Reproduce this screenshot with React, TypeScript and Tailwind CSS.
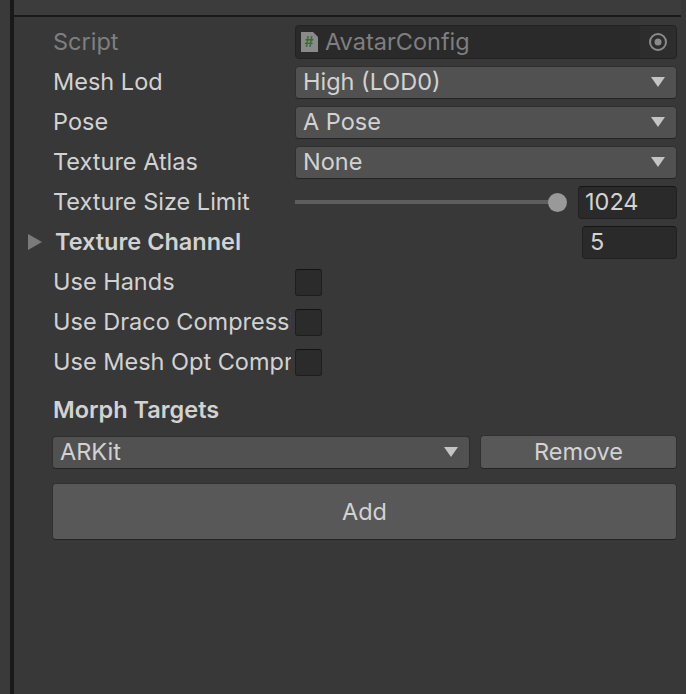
import React from 'react'

function Arrow() {
  return (
    <svg width="14" height="10" viewBox="0 0 14 10" className="shrink-0">
      <path d="M0 0 L14 0 L7 10 Z" fill="#c4c4c4" />
    </svg>
  )
}

function Dropdown({ value, className = '' }: { value: string; className?: string }) {
  return (
    <div
      className={`h-[33px] flex items-center justify-between pl-[7px] pr-[11px] bg-[#515151] rounded-[4px] border border-[#303030] border-b-[#242424] ${className}`}
    >
      <span className="text-[#d2d2d2]">{value}</span>
      <Arrow />
    </div>
  )
}

function Label({ children, dim = false }: { children: React.ReactNode; dim?: boolean }) {
  return (
    <div
      className={`w-[238px] mr-[4px] shrink-0 overflow-hidden whitespace-nowrap leading-[30px] ${dim ? 'text-[#7f7f7f]' : 'text-[#d2d2d2]'}`}
    >
      {children}
    </div>
  )
}

function Checkbox() {
  return <div className="w-[27px] h-[27px] rounded-[3px] bg-[#2b2b2b] border border-[#1e1e1e] border-t-[#141414]" />
}

export default function App() {
  return (
    <div className="w-[686px] h-[694px] bg-[#383838] flex font-['Inter',sans-serif] text-[23.5px] leading-[30px] overflow-hidden">
      {/* left strip */}
      <div className="w-[10px] shrink-0 bg-[#3a3a3a]" />
      <div className="w-[4px] shrink-0 bg-[#191919]" />

      <div className="flex-1 flex flex-col">
        {/* header */}
        <div className="h-[15px] bg-[#3c3c3c] mr-[5px]" />
        <div className="h-[2px] bg-[#1a1a1a] mr-[5px]" />

        <div className="flex flex-col pl-[39px] pr-[9px] pt-[5px]">
          {/* Script */}
          <div className="h-[40px] flex items-center">
            <Label dim>Script</Label>
            <div className="flex-1 h-[34px] flex items-center bg-[#2a2a2a] rounded-[4px] border border-[#222222] pl-[5px]">
              <svg width="17" height="20" viewBox="0 0 17 20" className="shrink-0">
                <path d="M0 0 H12 L17 5 V20 H0 Z" fill="#8a8a8a" />
                <text x="8" y="15" textAnchor="middle" fontSize="14" fontFamily="Inter" fill="#3a6b2f" fontWeight="600">#</text>
              </svg>
              <span className="ml-[7px] text-[#7f7f7f] flex-1">AvatarConfig</span>
              <div className="w-[36px] h-full flex items-center justify-center bg-[#2d2d2d] rounded-r-[4px]">
                <svg width="20" height="20" viewBox="0 0 20 20">
                  <circle cx="10" cy="10" r="8" fill="none" stroke="#8a8a8a" strokeWidth="2" />
                  <circle cx="10" cy="10" r="3.5" fill="#8a8a8a" />
                </svg>
              </div>
            </div>
          </div>

          {/* Mesh Lod */}
          <div className="h-[40px] flex items-center">
            <Label>Mesh Lod</Label>
            <Dropdown value="High (LOD0)" className="flex-1" />
          </div>

          {/* Pose */}
          <div className="h-[40px] flex items-center">
            <Label>Pose</Label>
            <Dropdown value="A Pose" className="flex-1" />
          </div>

          {/* Texture Atlas */}
          <div className="h-[40px] flex items-center">
            <Label>Texture Atlas</Label>
            <Dropdown value="None" className="flex-1" />
          </div>

          {/* Texture Size Limit */}
          <div className="h-[40px] flex items-center">
            <Label>Texture Size Limit</Label>
            <div className="flex-1 flex items-center">
              <div className="flex-1 flex items-center">
                <div className="flex-1 h-[4px] bg-[#5e5e5e]" />
                <div className="w-[19px] h-[19px] rounded-full bg-[#999999] -ml-[6px]" />
              </div>
              <div className="ml-[11px] w-[99px] h-[33px] flex items-center pl-[6px] bg-[#2a2a2a] rounded-[4px] border border-[#212121] border-t-[#151515] text-[#d2d2d2]">
                1024
              </div>
            </div>
          </div>

          {/* Texture Channel */}
          <div className="h-[40px] flex items-center">
            <div className="-ml-[25px] w-[28px] shrink-0 flex items-center">
              <svg width="14" height="16" viewBox="0 0 14 16">
                <path d="M0 0 L14 8 L0 16 Z" fill="#7b7b7b" />
              </svg>
            </div>
            <div className="flex-1 font-semibold text-[#d2d2d2] -ml-[1px]">Texture Channel</div>
            <div className="w-[95px] h-[33px] flex items-center pl-[7px] bg-[#2a2a2a] rounded-[4px] border border-[#212121] border-t-[#151515] text-[#d2d2d2]">
              5
            </div>
          </div>

          {/* checkboxes */}
          <div className="h-[40px] flex items-center">
            <Label>Use Hands</Label>
            <Checkbox />
          </div>
          <div className="h-[40px] flex items-center">
            <Label>Use Draco Compression</Label>
            <Checkbox />
          </div>
          <div className="h-[40px] flex items-center">
            <Label>Use Mesh Opt Compression</Label>
            <Checkbox />
          </div>

          {/* Morph Targets */}
          <div className="mt-[10px] h-[36px] flex items-center font-semibold text-[#d2d2d2]">Morph Targets</div>

          <div className="mt-[7px] flex items-center gap-[10px]">
            <Dropdown value="ARKit" className="flex-1 -ml-[1px]" />
            <div className="w-[197px] h-[34px] flex items-center justify-center bg-[#585858] rounded-[4px] border border-[#303030] border-b-[#242424] text-[#d2d2d2]">
              Remove
            </div>
          </div>

          <div className="mt-[14px] -ml-[1px] h-[57px] flex items-center justify-center bg-[#585858] rounded-[4px] border border-[#303030] border-b-[#242424] text-[#d2d2d2]">
            Add
          </div>
        </div>
      </div>
    </div>
  )
}
